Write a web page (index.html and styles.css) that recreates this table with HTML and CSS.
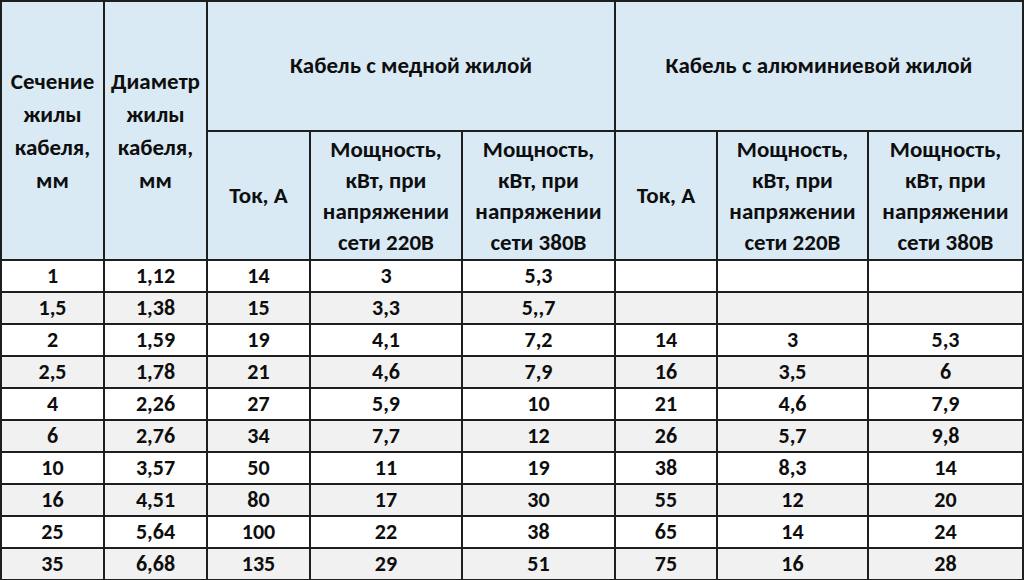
FILE: index.html
```html
<!DOCTYPE html>
<html lang="ru">
<head>
<meta charset="utf-8">
<link rel="stylesheet" href="styles.css">
</head>
<body>
<table class="cable">
  <colgroup>
    <col class="c1"><col class="c2"><col class="c3"><col class="c4"><col class="c5"><col class="c6"><col class="c7"><col class="c8">
  </colgroup>
  <thead>
    <tr class="h1">
      <th rowspan="2" class="tall">Сечение<br>жилы<br>кабеля,<br>мм</th>
      <th rowspan="2" class="tall">Диаметр<br>жилы<br>кабеля,<br>мм</th>
      <th colspan="3" class="group">Кабель с медной жилой</th>
      <th colspan="3" class="group">Кабель с алюминиевой жилой</th>
    </tr>
    <tr class="h2">
      <th>Ток, А</th>
      <th>Мощность,<br>кВт, при<br>напряжении<br>сети 220В</th>
      <th>Мощность,<br>кВт, при<br>напряжении<br>сети 380В</th>
      <th>Ток, А</th>
      <th>Мощность,<br>кВт, при<br>напряжении<br>сети 220В</th>
      <th>Мощность,<br>кВт, при<br>напряжении<br>сети 380В</th>
    </tr>
  </thead>
  <tbody>
    <tr><td>1</td><td>1,12</td><td>14</td><td>3</td><td>5,3</td><td></td><td></td><td></td></tr>
    <tr><td>1,5</td><td>1,38</td><td>15</td><td>3,3</td><td>5,,7</td><td></td><td></td><td></td></tr>
    <tr><td>2</td><td>1,59</td><td>19</td><td>4,1</td><td>7,2</td><td>14</td><td>3</td><td>5,3</td></tr>
    <tr><td>2,5</td><td>1,78</td><td>21</td><td>4,6</td><td>7,9</td><td>16</td><td>3,5</td><td>6</td></tr>
    <tr><td>4</td><td>2,26</td><td>27</td><td>5,9</td><td>10</td><td>21</td><td>4,6</td><td>7,9</td></tr>
    <tr><td>6</td><td>2,76</td><td>34</td><td>7,7</td><td>12</td><td>26</td><td>5,7</td><td>9,8</td></tr>
    <tr><td>10</td><td>3,57</td><td>50</td><td>11</td><td>19</td><td>38</td><td>8,3</td><td>14</td></tr>
    <tr><td>16</td><td>4,51</td><td>80</td><td>17</td><td>30</td><td>55</td><td>12</td><td>20</td></tr>
    <tr><td>25</td><td>5,64</td><td>100</td><td>22</td><td>38</td><td>65</td><td>14</td><td>24</td></tr>
    <tr><td>35</td><td>6,68</td><td>135</td><td>29</td><td>51</td><td>75</td><td>16</td><td>28</td></tr>
  </tbody>
</table>
</body>
</html>
```

FILE: styles.css
```css
html, body {
  margin: 0;
  padding: 0;
  background: #ffffff;
}

.cable {
  border-collapse: collapse;
  table-layout: fixed;
  width: 1022px;
  font-family: Carlito, Lato, "Open Sans", sans-serif;
  font-weight: 700;
  color: #0e0e0e;
}

.c1 { width: 103px; }
.c2 { width: 103px; }
.c3 { width: 103px; }
.c4 { width: 152px; }
.c5 { width: 153px; }
.c6 { width: 102px; }
.c7 { width: 151px; }
.c8 { width: 155px; }

.cable th,
.cable td {
  border: 2px solid #1e1e1e;
  text-align: center;
  vertical-align: middle;
  padding: 0;
  overflow: hidden;
  white-space: nowrap;
}

.cable th {
  background: #d9eaf5;
  font-size: 23px;
  line-height: 31px;
  font-weight: 700;
}

.cable .tall {
  line-height: 33px;
  padding-top: 0;
}

.cable .h1 th { height: 126px; }
.cable .h2 th { height: 127px; }

.cable .group {
  padding-bottom: 2px;
}

.cable td {
  height: 30px;
  font-size: 22px;
  line-height: 30px;
}

.cable tbody tr:nth-child(even) td {
  background: #f1f1f1;
}
```
